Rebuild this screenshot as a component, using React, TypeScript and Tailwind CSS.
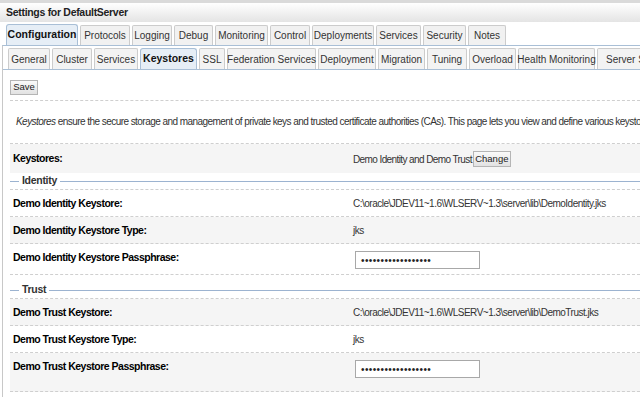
import React from "react";

const F = { fontFamily: '"Liberation Sans", Arial, sans-serif' };

const row1: [string, number][] = [
  ["Configuration", 72],
  ["Protocols", 50],
  ["Logging", 40],
  ["Debug", 39],
  ["Monitoring", 53],
  ["Control", 40],
  ["Deployments", 62],
  ["Services", 45],
  ["Security", 43],
  ["Notes", 38],
];

const row2: [string, number][] = [
  ["General", 42],
  ["Cluster", 40],
  ["Services", 44],
  ["Keystores", 57],
  ["SSL", 26],
  ["Federation Services", 89],
  ["Deployment", 58],
  ["Migration", 47],
  ["Tuning", 40],
  ["Overload", 47],
  ["Health Monitoring", 77],
  ["Server Start", 60],
];

function Row({
  label,
  gray,
  children,
  h = 27,
}: {
  label: string;
  gray?: boolean;
  children?: React.ReactNode;
  h?: number;
}) {
  return (
    <div
      className={`flex border-b border-dashed border-[#cfcfcf] ${gray ? "bg-[#f5f5f5]" : "bg-white"}`}
      style={{ height: h }}
    >
      <div className="w-[343px] shrink-0 pl-[3px] pt-[6px] text-[10.5px] tracking-[-0.5px] font-bold text-black">{label}</div>
      <div className="pt-[6px] text-[10px] tracking-[-0.5px] text-[#333] whitespace-nowrap">{children}</div>
    </div>
  );
}

function Legend({ text }: { text: string }) {
  return (
    <div className="flex items-center h-[16px]">
      <div className="w-[9px] h-px bg-[#9cb3d0]" />
      <div className="px-[3px] text-[10.5px] tracking-[-0.3px] font-bold text-[#333]">{text}</div>
      <div className="flex-1 h-px bg-[#9cb3d0]" />
    </div>
  );
}

function Pw() {
  return (
    <div className="mt-[1px] ml-[2px] w-[125px] h-[18px] border border-[#a8a8a8] bg-white flex items-center pl-[5px] text-[10px] tracking-[0.4px] text-[#222]">
      ••••••••••••••••••
    </div>
  );
}

export default function App() {
  return (
    <div className="w-[640px] h-[397px] overflow-hidden bg-white" style={F}>
      <div className="h-[3px] bg-[#dadada]" />
      <div className="h-[19px] bg-gradient-to-b from-white to-[#e4e4e4] flex items-center pl-[6px] text-[10.5px] tracking-[-0.3px] font-bold text-[#222]">
        Settings for DefaultServer
      </div>
      <div className="flex gap-[2px] pl-[6px] mt-[2px] h-[21px] items-end">
        {row1.map(([t, w], i) => (
          <div
            key={t}
            style={{ width: w }}
            className={
              i === 0
                ? "h-[21px] shrink-0 flex items-center justify-center rounded-t-[3px] border border-b-0 border-[#a9bfd6] bg-[#e6eef6] text-[10.5px] font-bold text-[#111]"
                : "h-[20px] shrink-0 flex items-center justify-center rounded-t-[2px] border border-b-0 border-[#cccccc] bg-[#f1f1f1] text-[10px] text-[#333]"
            }
          >
            {t}
          </div>
        ))}
      </div>
      <div className="ml-[2px] border-l border-[#c8c8c8] border-t border-t-[#a9bfd6] h-[352px]">
        <div className="flex gap-[2px] pl-[5px] pt-[2px] h-[24px] items-end border-b border-[#a9bfd6] overflow-hidden">
          {row2.map(([t, w], i) => (
            <div
              key={t}
              style={{ width: w }}
              className={
                i === 3
                  ? "h-[21px] shrink-0 flex items-center justify-center rounded-t-[3px] border border-b-0 border-[#a9bfd6] bg-[#e6eef6] text-[10.5px] font-bold text-[#111]"
                  : i === 11
                  ? "h-[21px] shrink-0 flex items-center pl-[8px] rounded-t-[2px] border border-b-0 border-[#cccccc] bg-[#f3f3f3] text-[10px] text-[#333] whitespace-nowrap overflow-hidden"
                  : "h-[21px] shrink-0 flex items-center justify-center rounded-t-[2px] border border-b-0 border-[#cccccc] bg-[#f3f3f3] text-[10px] text-[#333] whitespace-nowrap"
              }
            >
              {t}
            </div>
          ))}
        </div>
        <div className="pl-[7px]">
          <div className="h-[30px] pt-[10px]">
            <div className="w-[28px] h-[15px] border border-[#b5b5b5] bg-gradient-to-b from-[#fafafa] to-[#e2e2e2] flex items-center justify-center text-[9.5px] text-[#222]">
              Save
            </div>
          </div>
          <div className="border-t border-dashed border-[#cfcfcf]" />
          <div className="h-[42px] pl-[6px] pt-[13px] text-[10px] tracking-[-0.55px] text-[#333] whitespace-nowrap">
            <i>Keystores</i> ensure the secure storage and management of private keys and trusted certificate authorities (CAs). This page lets you view and define various keystores.
          </div>
          <div className="border-t border-dashed border-[#cfcfcf]" />
          <div className="flex h-[29px] bg-[#f5f5f5]">
            <div className="w-[343px] shrink-0 pl-[3px] pt-[7px] text-[10.5px] tracking-[-0.5px] font-bold text-black">Keystores:</div>
            <div className="pt-[7px] flex items-start text-[10px] tracking-[-0.6px] text-[#333] whitespace-nowrap">
              <span className="mt-[1px]">Demo Identity and Demo Trust</span>
              <span className="ml-[1px] w-[38px] h-[16px] border border-[#b5b5b5] bg-gradient-to-b from-[#fafafa] to-[#e2e2e2] flex items-center justify-center text-[9.5px] tracking-normal text-[#222]">
                Change
              </span>
            </div>
          </div>
          <Legend text="Identity" />
          <div className="border-t border-dashed border-[#cfcfcf]" />
          <Row label="Demo Identity Keystore:">C:\oracle\JDEV11~1.6\WLSERV~1.3\server\lib\DemoIdentity.jks</Row>
          <Row label="Demo Identity Keystore Type:" gray>jks</Row>
          <Row label="Demo Identity Keystore Passphrase:" h={31}>
            <Pw />
          </Row>
          <div className="h-[7px]" />
          <Legend text="Trust" />
          <div className="border-t border-dashed border-[#cfcfcf]" />
          <Row label="Demo Trust Keystore:" gray>C:\oracle\JDEV11~1.6\WLSERV~1.3\server\lib\DemoTrust.jks</Row>
          <Row label="Demo Trust Keystore Type:">jks</Row>
          <Row label="Demo Trust Keystore Passphrase:" gray h={39}>
            <Pw />
          </Row>
        </div>
      </div>
    </div>
  );
}
